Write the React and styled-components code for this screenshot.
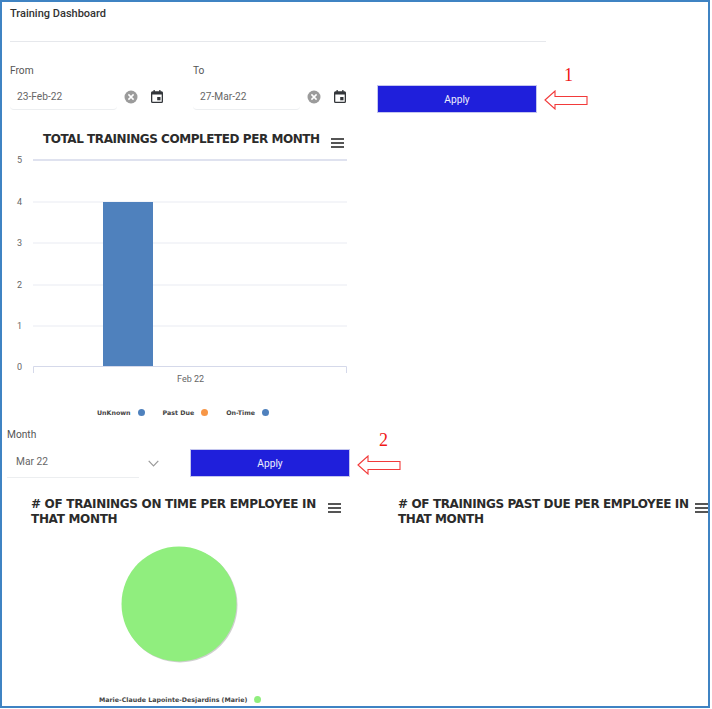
import React from "react";
import styled, { createGlobalStyle } from "styled-components";

const Global = createGlobalStyle`
  html, body { margin: 0; padding: 0; background: #fff; }
  body { font-family: Roboto, "Liberation Sans", sans-serif; }
`;

const Frame = styled.div`
  box-sizing: border-box;
  width: 710px;
  height: 708px;
  border: 2px solid #3f83c3;
  overflow: hidden;
  background: #fff;
  display: flex;
  flex-direction: column;
  & > * { flex: none; }
`;
const PageHeader = styled.header`
  box-sizing: border-box;
  margin-left: 8px;
  width: 536px;
  height: 40px;
  border-bottom: 1px solid #e6e8ec;
  padding-top: 5px;
  font-size: 11px;
  line-height: 14px;
  font-weight: 500;
  color: #333;
`;
const FilterRow = styled.div`
  display: flex;
  align-items: flex-start;
  margin-top: 22px;
  padding-left: 8px;
`;
const DateGroup = styled.div`
  width: ${(p) => p.$w}px;
  flex: none;
`;
const FieldLabel = styled.div`
  font-size: 10.2px;
  line-height: 13px;
  color: #555;
`;
const DateLine = styled.div`
  display: flex;
  align-items: center;
  margin-top: 6px;
  height: 27px;
`;
const DateInput = styled.div`
  box-sizing: border-box;
  width: 107px;
  height: 27px;
  padding: 7px 0 0 7px;
  border-bottom: 1px solid #eceef0;
  border-radius: 0 0 4px 4px;
  font-size: 10.2px;
  line-height: 14px;
  color: #666;
`;
const IconSlot = styled.span`
  display: flex;
  margin-left: ${(p) => p.$ml}px;
  width: ${(p) => p.$w}px;
  justify-content: center;
`;
const ApplyButton = styled.button`
  box-sizing: border-box;
  flex: none;
  width: ${(p) => p.$w}px;
  height: 28px;
  border: 1px solid #c4c6ee;
  background: #1f1fdb;
  color: #eeeefc;
  font-family: Roboto, "Liberation Sans", sans-serif;
  font-size: 10.2px;
  padding: 0;
`;
const ApplyWrap = styled.div`
  display: flex;
  align-items: center;
  margin-top: 21px;
  position: relative;
`;
const Arrow = styled.svg`
  display: block;
  flex: none;
  margin-left: 7px;
  margin-top: ${(p) => p.$dy}px;
`;
const Note = styled.span`
  position: absolute;
  left: ${(p) => p.$left}px;
  top: ${(p) => p.$top}px;
  font-family: "Liberation Serif", serif;
  font-size: 18px;
  line-height: 18px;
  color: #f01818;
`;
const ChartTitleRow = styled.div`
  display: flex;
  align-items: flex-start;
  justify-content: space-between;
  box-sizing: border-box;
  width: ${(p) => p.$w}px;
  margin-left: ${(p) => p.$ml}px;
`;
const ChartTitle = styled.h2`
  margin: 0;
  font-family: "DejaVu Sans", Verdana, sans-serif;
  font-size: 12px;
  letter-spacing: ${(p) => p.$ls}px;
  white-space: nowrap;
  line-height: 15px;
  font-weight: 700;
  color: #2b2b2b;
`;
const BarSection = styled.section`
  margin-top: 19px;
`;
const ChartSvg = styled.svg`
  display: block;
  margin-top: -2px;
`;
const AxisText = styled.text`
  font-family: Roboto, "Liberation Sans", sans-serif;
  font-size: 9px;
  fill: #666;
`;
const LegendRow = styled.div`
  display: flex;
  align-items: center;
  gap: 18px;
  margin: 0 0 0 95px;
  height: 12px;
`;
const LegendItem = styled.span`
  display: inline-flex;
  align-items: center;
  gap: 7px;
  font-family: "DejaVu Sans", Verdana, sans-serif;
  font-size: 6.3px;
  font-weight: 700;
  color: #444;
`;
const Dot = styled.i`
  display: block;
  width: 7px;
  height: 7px;
  border-radius: 50%;
  background: ${(p) => p.$c};
`;
const MonthRow = styled.div`
  display: flex;
  align-items: flex-start;
  margin-top: 10px;
  padding-left: 5px;
`;
const MonthGroup = styled.div`
  flex: none;
  width: 183px;
`;
const MonthLabel = styled.div`
  font-size: 10.2px;
  line-height: 13px;
  color: #555;
`;
const SelectLine = styled.div`
  display: flex;
  align-items: center;
  margin-top: 8px;
`;
const SelectValue = styled.div`
  box-sizing: border-box;
  width: 132px;
  height: 29px;
  padding: 6px 0 0 9px;
  border-bottom: 1px solid #eceef0;
  font-size: 10.2px;
  line-height: 14px;
  color: #666;
`;
const PieRow = styled.div`
  display: flex;
  margin-top: 19px;
`;
const PieColumn = styled.section`
  flex: none;
  width: ${(p) => p.$w}px;
`;
const PieWrap = styled.div`
  display: flex;
  justify-content: flex-start;
  margin: 16px 0 0 115.5px;
`;
const PieLegend = styled.div`
  display: flex;
  align-items: center;
  gap: 7px;
  margin: 31px 0 0 97px;
  font-family: "DejaVu Sans", Verdana, sans-serif;
  font-size: 6.3px;
  font-weight: 700;
  color: #444;
  white-space: nowrap;
`;
const MenuIcon = styled.svg`
  flex: none;
  margin-top: 6px;
`;

const Menu = () => (
  <MenuIcon width="13" height="10" viewBox="0 0 13 10">
    <path d="M0 1h13M0 5h13M0 9h13" stroke="#555" strokeWidth="1.8" />
  </MenuIcon>
);

const ClearIcon = () => (
  <svg width="14" height="14" viewBox="0 0 14 14">
    <circle cx="7" cy="7" r="6.5" fill="#9b9b9b" />
    <path d="M4.4 4.4l5.2 5.2M9.6 4.4l-5.2 5.2" stroke="#fff" strokeWidth="1.5" />
  </svg>
);

const CalendarIcon = () => (
  <svg width="12" height="13" viewBox="0 0 12 13">
    <path
      fillRule="evenodd"
      fill="#33363a"
      d="M2.5 0h1.3v1.3h4.4V0h1.3v1.3h1A1.5 1.5 0 0 1 12 2.8v8.7A1.5 1.5 0 0 1 10.5 13h-9A1.5 1.5 0 0 1 0 11.5V2.8a1.5 1.5 0 0 1 1.5-1.5h1zM1.3 4.6v6.9c0 .1.1.2.2.2h9c.1 0 .2-.1.2-.2V4.6z"
    />
    <rect x="6.2" y="7" width="3.3" height="3.3" fill="#33363a" />
  </svg>
);

const ChevronIcon = styled.svg`
  margin-left: 9px;
`;
const Chevron = () => (
  <ChevronIcon width="11" height="7" viewBox="0 0 11 7">
    <path d="M.7.8l4.8 5 4.8-5" fill="none" stroke="#9a9a9a" strokeWidth="1.2" />
  </ChevronIcon>
);

const RedArrow = ({ dy }) => (
  <Arrow $dy={dy} width="44" height="20" viewBox="0 0 44 20">
    <path
      d="M1 10 L11 1 V6.5 H43 V14.5 H11 V19 Z"
      fill="#fff"
      stroke="#f23a3a"
      strokeWidth="1.1"
    />
  </Arrow>
);

const ticks = [
  [5, 14],
  [4, 56],
  [3, 97],
  [2, 139],
  [1, 180],
];

const BarChart = () => (
  <ChartSvg width="345" height="260" viewBox="0 0 345 260">
    {ticks.map(([n, y]) => (
      <g key={n}>
        <line x1="31" x2="345" y1={y} y2={y} stroke={n === 5 ? "#d5d9ea" : "#e9ebf2"} strokeWidth={n === 5 ? 1.5 : 1} />
        <AxisText x="15" y={y + 3}>{n}</AxisText>
      </g>
    ))}
    <rect x="101" y="56" width="50" height="164.5" fill="#4f81bd" />
    <path d="M31.5 227V220.5H344.5V227" fill="none" stroke="#d5d9ea" />
    <AxisText x="15" y="223.5">0</AxisText>
    <AxisText x="175" y="236">Feb 22</AxisText>
  </ChartSvg>
);

const Pie = () => (
  <svg width="122" height="122" viewBox="0 0 122 122" style={{ display: "block" }}>
    <circle cx="62" cy="62" r="57.5" fill="#cfcfcf" />
    <circle cx="61" cy="61" r="57.5" fill="#90ee7e" />
  </svg>
);

export default function App() {
  return (
    <>
      <Global />
      <Frame>
        <PageHeader>Training Dashboard</PageHeader>

        <FilterRow>
          <DateGroup $w={183}>
            <FieldLabel>From</FieldLabel>
            <DateLine>
              <DateInput>23-Feb-22</DateInput>
              <IconSlot $ml={7} $w={14}><ClearIcon /></IconSlot>
              <IconSlot $ml={12} $w={14}><CalendarIcon /></IconSlot>
            </DateLine>
          </DateGroup>
          <DateGroup $w={184}>
            <FieldLabel>To</FieldLabel>
            <DateLine>
              <DateInput>27-Mar-22</DateInput>
              <IconSlot $ml={7} $w={14}><ClearIcon /></IconSlot>
              <IconSlot $ml={12} $w={14}><CalendarIcon /></IconSlot>
            </DateLine>
          </DateGroup>
          <ApplyWrap>
            <ApplyButton $w={160}>Apply</ApplyButton>
            <RedArrow dy={1} />
            <Note $left={187} $top={-19}>1</Note>
          </ApplyWrap>
        </FilterRow>

        <BarSection>
          <ChartTitleRow $w={301} $ml={41}>
            <ChartTitle $ls={-0.44}>TOTAL TRAININGS COMPLETED PER MONTH</ChartTitle>
            <Menu />
          </ChartTitleRow>
          <BarChart />
          <LegendRow>
            <LegendItem>UnKnown <Dot $c="#4f81bd" /></LegendItem>
            <LegendItem>Past Due <Dot $c="#f79646" /></LegendItem>
            <LegendItem>On-Time <Dot $c="#4f81bd" /></LegendItem>
          </LegendRow>
        </BarSection>

        <MonthRow>
          <MonthGroup>
            <MonthLabel>Month</MonthLabel>
            <SelectLine>
              <SelectValue>Mar 22</SelectValue>
              <Chevron />
            </SelectLine>
          </MonthGroup>
          <ApplyWrap>
            <ApplyButton $w={160}>Apply</ApplyButton>
            <RedArrow dy={3} />
            <Note $left={189} $top={-18}>2</Note>
          </ApplyWrap>
        </MonthRow>

        <PieRow>
          <PieColumn $w={367}>
            <ChartTitleRow $w={310} $ml={29}>
              <ChartTitle $ls={-0.31}>
                # OF TRAININGS ON TIME PER EMPLOYEE IN
                <br />
                THAT MONTH
              </ChartTitle>
              <Menu />
            </ChartTitleRow>
            <PieWrap><Pie /></PieWrap>
            <PieLegend>Marie-Claude Lapointe-Desjardins (Marie) <Dot $c="#90ee7e" /></PieLegend>
          </PieColumn>
          <PieColumn $w={339}>
            <ChartTitleRow $w={310} $ml={29}>
              <ChartTitle $ls={-0.38}>
                # OF TRAININGS PAST DUE PER EMPLOYEE IN
                <br />
                THAT MONTH
              </ChartTitle>
              <Menu />
            </ChartTitleRow>
          </PieColumn>
        </PieRow>
      </Frame>
    </>
  );
}
